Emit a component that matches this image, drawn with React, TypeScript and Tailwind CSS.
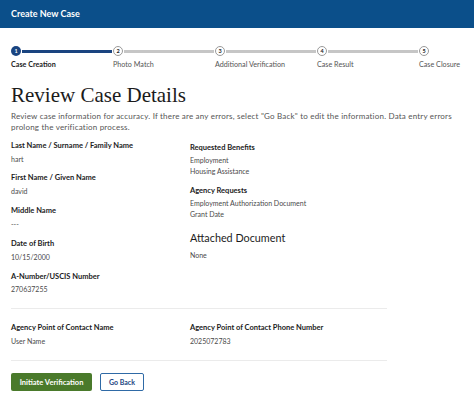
import React from "react";

const steps = ["Case Creation", "Photo Match", "Additional Verification", "Case Result", "Case Closure"];

function Field({ label, values }: { label: string; values: string[] }) {
  return (
    <div className="mb-[7.8px]">
      <div className="font-bold text-[#1b1b1b] text-[7.5px] leading-[12px]">{label}</div>
      <div className="mt-[0.9px] text-[#4a4a4a] text-[7px] leading-[12px]">
        {values.map((v) => (
          <div key={v}>{v}</div>
        ))}
      </div>
    </div>
  );
}

function RightField({ label, values, mt }: { label: string; values: string[]; mt: string }) {
  return (
    <div className={mt}>
      <div className="font-bold text-[#1b1b1b] text-[7.5px] leading-[12px]">{label}</div>
      <div className="mt-[1px] text-[#4a4a4a] text-[7px] leading-[10.6px]">
        {values.map((v) => (
          <div key={v}>{v}</div>
        ))}
      </div>
    </div>
  );
}

export default function App() {
  return (
    <div className="w-[474px] h-[400px] bg-white overflow-hidden" style={{ fontFamily: 'Lato, "Noto Sans", sans-serif' }}>
      <div className="h-[28px] bg-[#0b4f8a] flex items-center px-[11px]">
        <span className="text-white font-bold text-[9px]">Create New Case</span>
      </div>

      <div className="flex pl-[11px] pt-[18px]">
        {steps.map((s, i) => (
          <div key={s} className={i < 4 ? "w-[102px]" : "flex-1"}>
            <div className="flex items-center h-[10px]">
              <div
                className={
                  i === 0
                    ? "w-[10px] h-[10px] rounded-full bg-[#1a4480] text-white flex items-center justify-center text-[5.5px] font-bold"
                    : "w-[10px] h-[10px] rounded-full bg-white border border-[#9a9a9a] text-[#222] flex items-center justify-center text-[5.5px] font-bold"
                }
              >
                {i + 1}
              </div>
              {i < 4 && (
                <div className={i === 0 ? "flex-1 h-[3px] mx-[1px] bg-[#1a4480]" : "flex-1 h-[3px] mx-[1px] bg-[#c6c6c6]"} />
              )}
            </div>
            <div className={i === 0 ? "mt-[4px] text-[7.2px] font-bold text-[#1b1b1b]" : "mt-[4px] text-[7.2px] text-[#555]"}>
              {s}
            </div>
          </div>
        ))}
      </div>

      <div className="px-[11px]">
        <h1 className="mt-[11px] text-[21px] leading-[26px] text-[#1b1b1b]" style={{ fontFamily: '"Liberation Serif", serif' }}>
          Review Case Details
        </h1>
        <p className="mt-[3px] w-[460px] text-[8px] leading-[11px] tracking-[0.2px] text-[#555]">
          Review case information for accuracy. If there are any errors, select "Go Back" to edit the information. Data entry errors prolong the verification process.
        </p>

        <div className="grid grid-cols-[179px_1fr] mt-[7px] w-[376px]">
          <div>
            <Field label="Last Name / Surname / Family Name" values={["hart"]} />
            <Field label="First Name / Given Name" values={["david"]} />
            <Field label="Middle Name" values={["---"]} />
            <Field label="Date of Birth" values={["10/15/2000"]} />
            <Field label="A-Number/USCIS Number" values={["270637255"]} />
          </div>
          <div className="pt-[2.3px]">
            <RightField label="Requested Benefits" values={["Employment", "Housing Assistance"]} mt="mt-0" />
            <RightField label="Agency Requests" values={["Employment Authorization Document", "Grant Date"]} mt="mt-[9px]" />
            <div className="text-[10.8px] leading-[16px] text-[#1b1b1b] mt-[10.5px]">Attached Document</div>
            <div className="mt-[4px] text-[7px] leading-[11px] text-[#4a4a4a]">None</div>
          </div>
        </div>

        <div className="w-[376px] border-t border-[#ebebeb] mt-[5px]" />
        <div className="grid grid-cols-[179px_1fr] w-[376px] pt-[13px]">
          <div>
            <div className="font-bold text-[#1b1b1b] text-[7.5px] leading-[12px]">Agency Point of Contact Name</div>
            <div className="mt-[0.7px] text-[#4a4a4a] text-[7px] leading-[12px]">User Name</div>
          </div>
          <div>
            <div className="font-bold text-[#1b1b1b] text-[7.5px] leading-[12px]">Agency Point of Contact Phone Number</div>
            <div className="mt-[0.7px] text-[#4a4a4a] text-[7px] leading-[12px]">2025072783</div>
          </div>
        </div>
        <div className="w-[376px] border-t border-[#ebebeb] mt-[12.8px]" />

        <div className="flex gap-[8px] mt-[12.5px]">
          <button className="h-[18px] w-[81px] bg-[#4a7a2b] rounded-[2px] text-white font-bold text-[7.5px] flex items-center justify-center">Initiate Verification</button>
          <button className="h-[18px] w-[44px] bg-white border border-[#2f6aa6] rounded-[2px] text-[#1a4480] font-bold text-[7px] flex items-center justify-center">Go Back</button>
        </div>
      </div>
    </div>
  );
}
